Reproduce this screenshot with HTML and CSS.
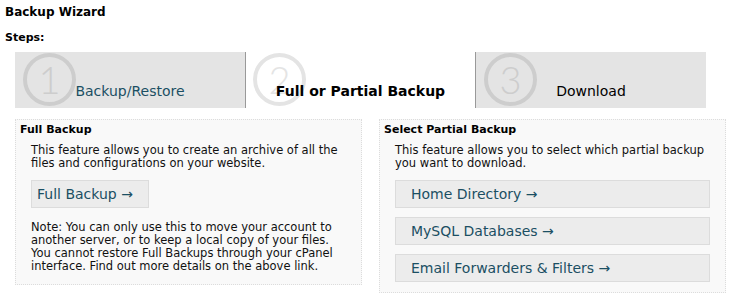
FILE: index.html
```html
<!DOCTYPE html>
<html>
<head>
<meta charset="utf-8">
<link rel="stylesheet" href="styles.css">
</head>
<body>
<h1 class="title">Backup Wizard</h1>
<div class="steps-label">Steps:</div>
<div class="steps">
  <div class="step step-off">
    <span class="num">1</span>
    <span class="step-text link">Backup/Restore</span>
  </div>
  <div class="step step-on">
    <span class="num">2</span>
    <span class="step-text current">Full or Partial Backup</span>
  </div>
  <div class="step step-off step-last">
    <span class="num">3</span>
    <span class="step-text">Download</span>
  </div>
</div>
<div class="panels">
  <div class="panel panel-left">
    <div class="panel-title">Full Backup</div>
    <div class="panel-body">
      <p class="desc">This feature allows you to create an archive of all the files and configurations on your website.</p>
      <a class="btn btn-full">Full Backup →</a>
      <p class="note">Note: You can only use this to move your account to another server, or to keep a local copy of your files. You cannot restore Full Backups through your cPanel interface. Find out more details on the above link.</p>
    </div>
  </div>
  <div class="panel panel-right">
    <div class="panel-title">Select Partial Backup</div>
    <div class="panel-body">
      <p class="desc">This feature allows you to select which partial backup you want to download.</p>
      <div class="btn-list">
        <a class="btn btn-wide">Home Directory →</a>
        <a class="btn btn-wide">MySQL Databases →</a>
        <a class="btn btn-wide">Email Forwarders &amp; Filters →</a>
      </div>
    </div>
  </div>
</div>
</body>
</html>
```
FILE: styles.css
```css
html, body {
  margin: 0;
  padding: 0;
  background: #fff;
}
body {
  font-family: "DejaVu Sans", Verdana, sans-serif;
  color: #000;
  padding: 5px 0 0 5px;
}
.title {
  font-size: 12px;
  font-weight: bold;
  margin: 0;
  line-height: 14px;
}
.steps-label {
  font-size: 11px;
  font-weight: bold;
  margin-top: 12px;
  line-height: 13px;
}
.steps {
  display: flex;
  margin: 8px 0 0 10px;
  height: 56px;
}
.step {
  position: relative;
  width: 230px;
  display: flex;
  align-items: flex-end;
  justify-content: center;
  padding-bottom: 8px;
  box-sizing: border-box;
  font-size: 14px;
  line-height: 18px;
}
.step-off {
  background: #e4e4e4;
}
.step-on {
  background: #fff;
  border-left: 1px solid #999;
  border-right: 1px solid #999;
  width: 231px;
}
.num {
  position: absolute;
  left: 8px;
  top: 1px;
  width: 45px;
  height: 45px;
  border: 4px solid #cdcdcd;
  border-radius: 50%;
  color: #cdcdcd;
  font-family: Lato, "Liberation Sans", sans-serif;
  font-weight: 300;
  font-size: 38px;
  line-height: 45px;
  text-align: center;
}
.step-on .num {
  left: 7px;
  color: #e4e4e4;
  border-color: #e4e4e4;
}
.step-text {
  position: relative;
}
.link {
  color: #1b4f63;
}
.current {
  font-weight: bold;
  color: #000;
}
.panels {
  display: flex;
  align-items: flex-start;
  gap: 17px;
  margin: 11px 0 0 10px;
}
.panel {
  width: 347px;
  box-sizing: border-box;
  border: 1px dotted #dcdcdc;
  background: #f9f9f9;
  padding: 3px 4px 10px 4px;
}
.panel-left {
  height: 166px;
}
.panel-right {
  height: 174px;
}
.panel-title {
  font-size: 11px;
  font-weight: bold;
  line-height: 13px;
}
.panel-body {
  padding: 8px 14px 0 11px;
}
.desc, .note {
  margin: 0;
  font-size: 11.5px;
  line-height: 12.5px;
  color: #111;
}
.btn {
  display: block;
  box-sizing: border-box;
  background: #ececec;
  border: 1px solid #dcdcdc;
  color: #1b4f63;
  font-size: 14px;
  line-height: 26px;
  height: 28px;
  text-decoration: none;
}
.btn-full {
  width: 118px;
  margin-top: 11px;
  padding-left: 5px;
}
.note {
  margin-top: 13px;
  line-height: 13px;
}
.btn-list {
  display: flex;
  flex-direction: column;
  gap: 9px;
  margin-top: 11px;
}
.btn-wide {
  width: 315px;
  padding-left: 15px;
}
```
